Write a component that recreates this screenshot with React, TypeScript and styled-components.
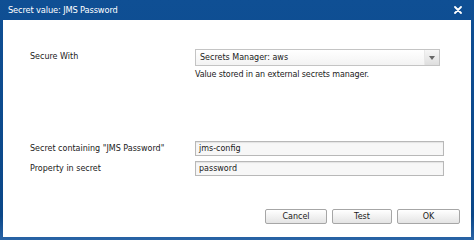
import styled, { createGlobalStyle } from 'styled-components';

const GlobalStyle = createGlobalStyle`
  html, body {
    margin: 0;
    padding: 0;
    background: #ffffff;
  }
  body {
    font-family: "DejaVu Sans", "Liberation Sans", sans-serif;
  }
`;

const Dialog = styled.div`
  width: 474px;
  height: 240px;
  box-sizing: border-box;
  display: flex;
  flex-direction: column;
  background: linear-gradient(#0f4f94, #0b4788 90%, #2a64a6);
  padding: 0 3px 3px 3px;
`;

const TitleBar = styled.div`
  height: 20px;
  display: flex;
  align-items: center;
  justify-content: space-between;
  padding: 0 9px 0 5px;
  color: #ffffff;
  font-size: 8.3px;
  letter-spacing: -0.15px;
`;

const CloseButton = styled.span`
  width: 8px;
  height: 8px;
  display: flex;
  align-items: center;
  justify-content: center;
`;

const Body = styled.div`
  flex: 1;
  background: #ffffff;
  display: flex;
  flex-direction: column;
  padding: 29px 27px 13px 27px;
  font-size: 8px;
  color: #1a1a1a;
`;

const FormGrid = styled.div`
  display: grid;
  grid-template-columns: 165px 1fr;
  align-items: center;
`;

const Label = styled.div<{ $top?: boolean }>`
  align-self: ${(p) => (p.$top ? 'start' : 'center')};
  padding-top: ${(p) => (p.$top ? '2px' : '0')};
  line-height: 12px;
`;

const Select = styled.div`
  height: 17px;
  margin-right: 4px;
  box-sizing: border-box;
  border: 1px solid #c4c4c4;
  background: linear-gradient(#ffffff, #f3f3f3);
  display: flex;
  align-items: center;
  padding-left: 4px;
`;

const SelectText = styled.span`
  flex: 1;
`;

const SelectArrow = styled.span`
  width: 14px;
  height: 100%;
  display: flex;
  align-items: center;
  justify-content: center;
  background: linear-gradient(#f6f6f6, #dedede);
  border-left: 1px solid #e8e8e8;
`;

const Hint = styled.div`
  margin-top: 3px;
  line-height: 12px;
  letter-spacing: -0.12px;
`;

const Spacer = styled.div<{ $h: number }>`
  grid-column: 1 / span 2;
  height: ${(p) => p.$h}px;
`;

const Input = styled.div`
  height: 15px;
  box-sizing: border-box;
  border: 1px solid #b8b8b8;
  background: #f7f7f7;
  box-shadow: inset 0 1px 1px rgba(0, 0, 0, 0.08);
  display: flex;
  align-items: center;
  padding-left: 3px;
`;

const Footer = styled.div`
  margin-top: auto;
  display: flex;
  justify-content: flex-end;
  gap: 5px;
  margin-right: -16px;
`;

const Button = styled.button<{ $w: number }>`
  width: ${(p) => p.$w}px;
  height: 15px;
  padding: 0;
  border: 1px solid #a6a6a6;
  border-radius: 2px;
  background: linear-gradient(#ffffff, #e4e4e4);
  font-family: "DejaVu Sans", "Liberation Sans", sans-serif;
  font-size: 8px;
  color: #1a1a1a;
`;

export default function App() {
  return (
    <>
      <GlobalStyle />
      <Dialog>
        <TitleBar>
          <span>Secret value: JMS Password</span>
          <CloseButton>
            <svg width="8" height="8" viewBox="0 0 8 8">
              <path d="M1 1 L7 7 M7 1 L1 7" stroke="#ffffff" strokeWidth="1.8" strokeLinecap="round" />
            </svg>
          </CloseButton>
        </TitleBar>
        <Body>
          <FormGrid>
            <Label $top>Secure With</Label>
            <Select>
              <SelectText>Secrets Manager: aws</SelectText>
              <SelectArrow>
                <svg width="6" height="4" viewBox="0 0 6 4">
                  <path d="M0 0 L6 0 L3 4 Z" fill="#666666" />
                </svg>
              </SelectArrow>
            </Select>
            <div />
            <Hint>Value stored in an external secrets manager.</Hint>
            <Spacer $h={60} />
            <Label>Secret containing "JMS Password"</Label>
            <Input>jms-config</Input>
            <Spacer $h={5} />
            <Label>Property in secret</Label>
            <Input>password</Input>
          </FormGrid>
          <Footer>
            <Button $w={62}>Cancel</Button>
            <Button $w={60}>Test</Button>
            <Button $w={63}>OK</Button>
          </Footer>
        </Body>
      </Dialog>
    </>
  );
}
